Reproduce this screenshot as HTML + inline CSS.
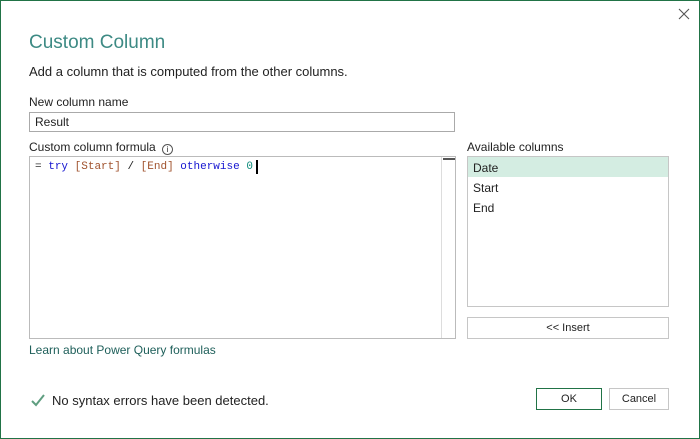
<!DOCTYPE html>
<html><head><style>
*{margin:0;padding:0;box-sizing:border-box}
body{width:700px;height:439px;background:#fff;font-family:"Segoe UI","Liberation Sans",sans-serif;color:#222;position:relative;overflow:hidden}
.frame{position:absolute;left:0;top:0;width:700px;height:439px;border:1px solid #217346}
.a{position:absolute;white-space:nowrap}
.box{position:absolute;border:1px solid #c6c6c6;background:#fff}
.mono{font-family:"Liberation Mono",monospace;font-size:11px}
</style></head><body>
<div class="frame"></div>
<svg class="a" style="left:678px;top:8px" width="12" height="12" viewBox="0 0 12 12"><path d="M1 1 L11 11 M11 1 L1 11" stroke="#555" stroke-width="1.1"/></svg>
<div class="a" style="left:29px;top:32px;font-size:19px;color:#3d8a84">Custom Column</div>
<div class="a" style="left:29px;top:64px;font-size:13px">Add a column that is computed from the other columns.</div>
<div class="a" style="left:29px;top:95px;font-size:12px">New column name</div>
<div class="box" style="left:29px;top:112px;width:426px;height:20px;border-color:#aaa"></div>
<div class="a" style="left:35px;top:115px;font-size:12px">Result</div>
<div class="a" style="left:29px;top:140px;font-size:12px">Custom column formula <span style="display:inline-block;width:11px;height:11px;border:1px solid #555;border-radius:50%;font-size:8px;line-height:9px;text-align:center;vertical-align:-1px;margin-left:3px">i</span></div>
<div class="box" style="left:29px;top:156px;width:427px;height:183px;border-color:#bbb"></div>
<div class="a" style="left:441px;top:157px;width:1px;height:181px;background:#ddd"></div>
<div class="a" style="left:443px;top:158px;width:12px;height:2px;background:#555"></div>
<div class="a mono" style="left:35px;top:161px"><span style="color:#333">=</span> <span style="color:#1515d0">try</span> <span style="color:#a0522d">[Start]</span> / <span style="color:#a0522d">[End]</span> <span style="color:#1515d0">otherwise</span> <span style="color:#0a8a7a">0</span></div>
<div class="a" style="left:256px;top:160px;width:2px;height:14px;background:#000"></div>
<div class="a" style="left:467px;top:140px;font-size:12px">Available columns</div>
<div class="box" style="left:467px;top:156px;width:202px;height:151px"></div>
<div class="a" style="left:468px;top:157px;width:200px;height:20px;background:#d4ede2"></div>
<div class="a" style="left:473px;top:161px;font-size:12px">Date</div>
<div class="a" style="left:473px;top:181px;font-size:12px">Start</div>
<div class="a" style="left:473px;top:201px;font-size:12px">End</div>
<div class="box" style="left:467px;top:317px;width:202px;height:22px;font-size:11px;text-align:center;line-height:20px">&lt;&lt; Insert</div>
<div class="a" style="left:29px;top:343px;font-size:12px;color:#1e5f5a">Learn about Power Query formulas</div>
<svg class="a" style="left:30px;top:392px" width="16" height="16" viewBox="0 0 16 16"><path d="M2 9 L6 13 L14 3" fill="none" stroke="#5f9e80" stroke-width="2"/></svg>
<div class="a" style="left:52px;top:393px;font-size:13px">No syntax errors have been detected.</div>
<div class="box" style="left:536px;top:388px;width:66px;height:22px;border-color:#217346;font-size:11px;text-align:center;line-height:20px">OK</div>
<div class="box" style="left:609px;top:388px;width:60px;height:22px;font-size:11px;text-align:center;line-height:20px">Cancel</div>
</body></html>
